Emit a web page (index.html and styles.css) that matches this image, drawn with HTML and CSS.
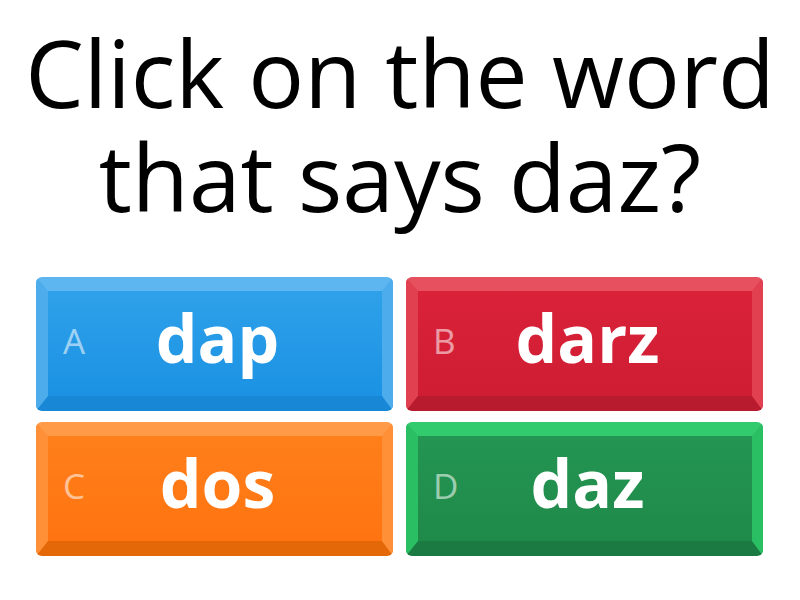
FILE: index.html
```html
<!DOCTYPE html>
<html>
<head>
<meta charset="utf-8">
<link rel="stylesheet" href="styles.css">
</head>
<body>
<div class="page">
  <h1 class="question">Click on the word<br>that says daz?</h1>
  <div class="answers">
    <div class="answer blue"><span class="key">A</span><span class="word">dap</span></div>
    <div class="answer red"><span class="key">B</span><span class="word">darz</span></div>
    <div class="answer orange"><span class="key">C</span><span class="word">dos</span></div>
    <div class="answer green"><span class="key">D</span><span class="word">daz</span></div>
  </div>
</div>
</body>
</html>
```
FILE: styles.css
```css
html, body {
  margin: 0;
  padding: 0;
  background: #ffffff;
}
.page {
  width: 800px;
  height: 600px;
  padding-top: 20px;
  box-sizing: border-box;
  font-family: "Open Sans", "Noto Sans", sans-serif;
}
.question {
  margin: 0;
  font-size: 93px;
  line-height: 104px;
  font-weight: 400;
  text-align: center;
  color: #000000;
}
.answers {
  margin: 49px 0 0 36px;
  display: grid;
  grid-template-columns: 357px 357px;
  grid-auto-rows: 134px;
  column-gap: 13px;
  row-gap: 11px;
}
.answer {
  box-sizing: border-box;
  border-radius: 6px;
  border-style: solid;
  border-width: 14px 11px 15px 12px;
  display: flex;
  align-items: center;
  padding: 0 50px 0 15px;
  color: #ffffff;
}
.key {
  width: 40px;
  font-size: 35px;
  line-height: 40px;
  opacity: 0.55;
  margin-top: -6px;
}
.word {
  flex: 1;
  text-align: center;
  font-size: 66px;
  font-weight: 700;
  line-height: 80px;
  margin-top: -13px;
}
.blue {
  border-color: #5db6ef #4cacec #1787d6 #4cacec;
  background: linear-gradient(#2fa1ea, #1b92e3);
}
.red {
  border-color: #e6505f #e0404f #b81a2e #e0404f;
  background: linear-gradient(#da2239, #cf1d33);
}
.orange {
  border-color: #ff9b48 #ff9038 #e46808 #ff9038;
  background: linear-gradient(#ff7f1b, #ff7410);
}
.green {
  border-color: #31cb6d #2bbf64 #1b7a42 #2bbf64;
  background: linear-gradient(#249552, #1f8a4a);
}
```
